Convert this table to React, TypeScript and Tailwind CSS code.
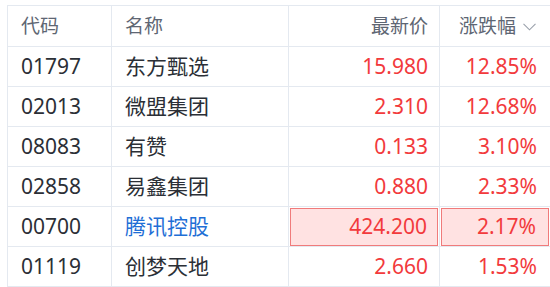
import React from "react";

type Row = { code: string; name: string; price: string; chg: string; hl?: boolean };

const rows: Row[] = [
  { code: "01797", name: "东方甄选", price: "15.980", chg: "12.85%" },
  { code: "02013", name: "微盟集团", price: "2.310", chg: "12.68%" },
  { code: "08083", name: "有赞", price: "0.133", chg: "3.10%" },
  { code: "02858", name: "易鑫集团", price: "0.880", chg: "2.33%" },
  { code: "00700", name: "腾讯控股", price: "424.200", chg: "2.17%", hl: true },
  { code: "01119", name: "创梦天地", price: "2.660", chg: "1.53%" },
];

const font = { fontFamily: '"Noto Sans", "Noto Sans CJK SC", sans-serif' };

export default function App() {
  return (
    <div className="w-[550px] h-[287px] bg-white overflow-hidden pt-[5px] pl-[7px]" style={font}>
      <div className="grid grid-cols-[104px_177px_151px_111px] w-[543px] border-l border-t border-[#e4e9f0]">
        {/* header */}
        <div className="h-[41px] border-r border-b border-[#e4e9f0] flex items-center pl-[13px] text-[19px] text-[#5e6673]">代码</div>
        <div className="h-[41px] border-r border-b border-[#e4e9f0] flex items-center pl-[13px] text-[19px] text-[#5e6673]">名称</div>
        <div className="h-[41px] border-r border-b border-[#e4e9f0] flex items-center justify-end pr-[11px] text-[19px] text-[#5e6673]">最新价</div>
        <div className="h-[41px] border-r border-b border-[#e4e9f0] flex items-center justify-end pr-[14px] text-[19px] text-[#5e6673]">
          <span>涨跌幅</span>
          <svg width="13" height="8" viewBox="0 0 13 8" className="ml-[7px] mt-[2px]">
            <polyline points="0.5,0.8 6.5,6.8 12.5,0.8" fill="none" stroke="#9aa1ab" strokeWidth="1.1" />
          </svg>
        </div>
        {rows.map((r) => (
          <React.Fragment key={r.code}>
            <div className="h-[40px] border-r border-b border-[#e4e9f0] flex items-center pl-[13px] text-[21px] text-[#2b2f36]">{r.code}</div>
            <div className={`h-[40px] border-r border-b border-[#e4e9f0] flex items-center pl-[13px] text-[21px] ${r.hl ? "text-[#1f6fd6]" : "text-[#2b2f36]"}`}>{r.name}</div>
            <div className="h-[40px] border-r border-b border-[#e4e9f0] flex">
              {r.hl ? (
                <div className="flex-1 mx-[1px] mt-[1px] mb-0 border border-[#f07b7b] bg-[#ffe2e2] flex items-center justify-end pr-[10px] text-[21px] text-[#f23a3c]">{r.price}</div>
              ) : (
                <div className="flex-1 flex items-center justify-end pr-[11px] text-[21px] text-[#f23a3c]">{r.price}</div>
              )}
            </div>
            <div className="h-[40px] border-r border-b border-[#e4e9f0] flex">
              {r.hl ? (
                <div className="flex-1 ml-[1px] mr-[1px] mt-[1px] mb-0 border border-[#f07b7b] bg-[#ffe2e2] flex items-center justify-end pr-[12px] text-[21px] text-[#f23a3c]">{r.chg}</div>
              ) : (
                <div className="flex-1 flex items-center justify-end pr-[13px] text-[21px] text-[#f23a3c]">{r.chg}</div>
              )}
            </div>
          </React.Fragment>
        ))}
      </div>
    </div>
  );
}
